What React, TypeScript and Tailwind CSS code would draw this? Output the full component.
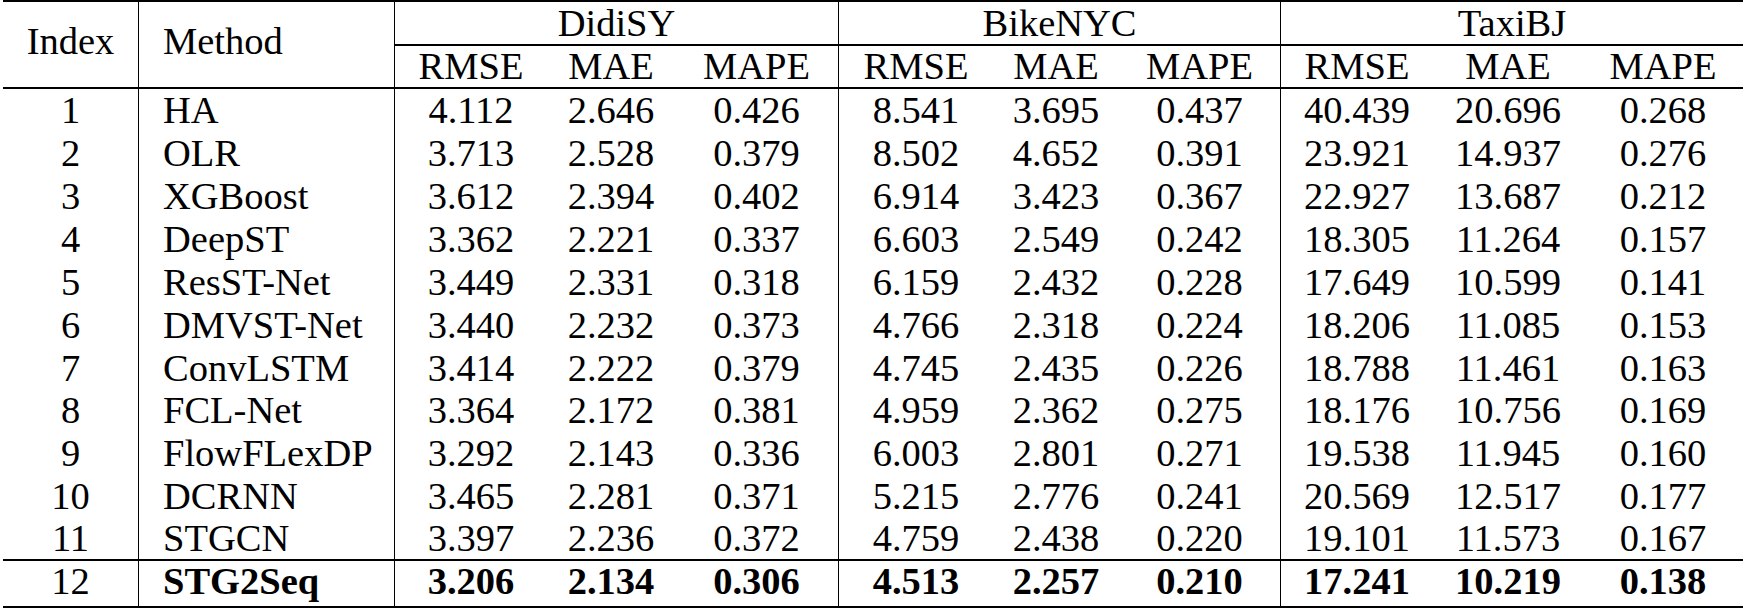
import React from "react";

const rows: (string | number)[][] = [
  [1, "HA", "4.112", "2.646", "0.426", "8.541", "3.695", "0.437", "40.439", "20.696", "0.268"],
  [2, "OLR", "3.713", "2.528", "0.379", "8.502", "4.652", "0.391", "23.921", "14.937", "0.276"],
  [3, "XGBoost", "3.612", "2.394", "0.402", "6.914", "3.423", "0.367", "22.927", "13.687", "0.212"],
  [4, "DeepST", "3.362", "2.221", "0.337", "6.603", "2.549", "0.242", "18.305", "11.264", "0.157"],
  [5, "ResST-Net", "3.449", "2.331", "0.318", "6.159", "2.432", "0.228", "17.649", "10.599", "0.141"],
  [6, "DMVST-Net", "3.440", "2.232", "0.373", "4.766", "2.318", "0.224", "18.206", "11.085", "0.153"],
  [7, "ConvLSTM", "3.414", "2.222", "0.379", "4.745", "2.435", "0.226", "18.788", "11.461", "0.163"],
  [8, "FCL-Net", "3.364", "2.172", "0.381", "4.959", "2.362", "0.275", "18.176", "10.756", "0.169"],
  [9, "FlowFLexDP", "3.292", "2.143", "0.336", "6.003", "2.801", "0.271", "19.538", "11.945", "0.160"],
  [10, "DCRNN", "3.465", "2.281", "0.371", "5.215", "2.776", "0.241", "20.569", "12.517", "0.177"],
  [11, "STGCN", "3.397", "2.236", "0.372", "4.759", "2.438", "0.220", "19.101", "11.573", "0.167"],
  [12, "STG2Seq", "3.206", "2.134", "0.306", "4.513", "2.257", "0.210", "17.241", "10.219", "0.138"],
];

const sub = ["RMSE", "MAE", "MAPE"];
const rightRule = new Set([0, 1, 4, 7]);

export default function App() {
  return (
    <div className="w-[1748px] h-[609px] bg-white text-black font-['Liberation_Serif','Times_New_Roman',serif]">
      <div className="ml-[3px] w-[1740px] grid grid-cols-[136px_256px_152px_128px_164px_154px_126px_162px_152px_150px_160px] grid-rows-[44px_43px_repeat(11,42.9px)_45px] border-t-2 border-b-2 border-black text-[38.5px] leading-none">
        <div className="row-span-2 flex items-center justify-center pb-[6px] border-r border-b-2 border-black">Index</div>
        <div className="row-span-2 flex items-center pl-[24px] pb-[6px] border-r border-b-2 border-black">Method</div>
        <div className="col-span-3 flex items-center justify-center border-r border-b-2 border-black">DidiSY</div>
        <div className="col-span-3 flex items-center justify-center border-r border-b-2 border-black">BikeNYC</div>
        <div className="col-span-3 flex items-center justify-center border-b-2 border-black">TaxiBJ</div>
        {[0, 1, 2].map((g) =>
          sub.map((s, i) => (
            <div
              key={`${g}-${s}`}
              className={`flex items-center justify-center border-b-2 border-black ${i === 2 && g < 2 ? "border-r" : ""}`}
            >
              {s}
            </div>
          ))
        )}
        {rows.map((r, ri) =>
          r.map((c, ci) => (
            <div
              key={`${ri}-${ci}`}
              className={`flex items-center border-black ${ci === 1 ? "pl-[24px]" : "justify-center"} ${
                rightRule.has(ci) ? "border-r" : ""
              } ${ri === 10 ? "border-b-2" : ""} ${ri === 11 ? "pb-[4px]" : ""} ${ri === 11 && ci > 0 ? "font-bold" : ""}`}
            >
              {c}
            </div>
          ))
        )}
      </div>
    </div>
  );
}
